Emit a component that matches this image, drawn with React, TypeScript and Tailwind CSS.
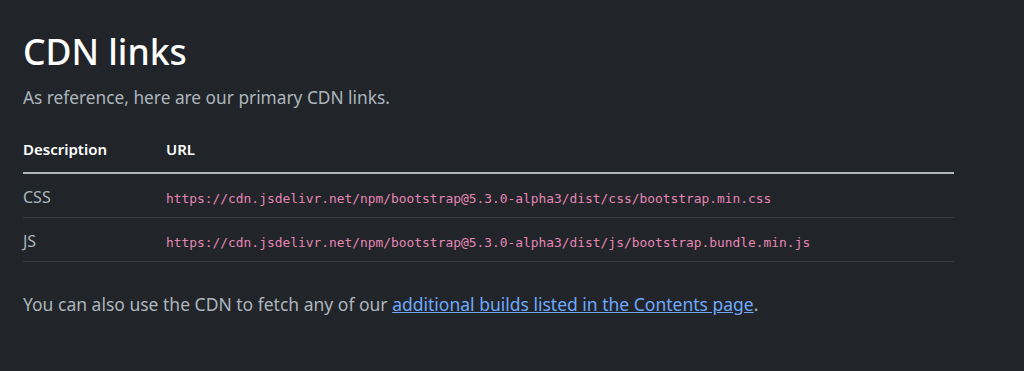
const LINKS = [
  { desc: "CSS", url: "https://cdn.jsdelivr.net/npm/bootstrap@5.3.0-alpha3/dist/css/bootstrap.min.css" },
  { desc: "JS", url: "https://cdn.jsdelivr.net/npm/bootstrap@5.3.0-alpha3/dist/js/bootstrap.bundle.min.js" },
];

export default function App() {
  return (
    <div className="min-h-[371px] bg-[#212529] px-[23px] pt-[26px] font-['Noto_Sans',sans-serif] text-[#dee2e6]">
      {/* Heading */}
      <h2 className="text-[35.5px] font-medium leading-[50px] text-white">CDN links</h2>
      <p className="mt-[9px] text-[17.3px] leading-[26px] text-[#adb5bd]">
        As reference, here are our primary CDN links.
      </p>

      {/* Table */}
      <table className="mt-[17px] w-[931px] border-separate border-spacing-0 text-left">
        <thead>
          <tr>
            <th className="w-[143px] border-b-2 border-[#adb5bd] pt-[9px] pb-[11px] text-[15px] leading-6 font-semibold text-white">
              Description
            </th>
            <th className="border-b-2 border-[#adb5bd] pt-[9px] pb-[11px] text-[15px] leading-6 font-semibold text-white">
              URL
            </th>
          </tr>
        </thead>
        <tbody>
          {LINKS.map((l) => (
            <tr key={l.desc}>
              <td className="border-b border-[#373b3e] pt-[11px] pb-[8px] text-[16px] leading-6 text-[#adb5bd]">{l.desc}</td>
              <td className="border-b border-[#373b3e] pt-[11px] pb-[8px] text-[16px] leading-6">
                <code className="font-['DejaVu_Sans_Mono',monospace] text-[12.9px] leading-none text-[#e685b5]">{l.url}</code>
              </td>
            </tr>
          ))}
        </tbody>
      </table>

      <p className="mt-[29px] text-[17.5px] leading-[26px] text-[#adb5bd]">
        You can also use the CDN to fetch any of our{" "}
        <a href="#" className="text-[#6ea8fe] underline">
          additional builds listed in the Contents page
        </a>
        .
      </p>
    </div>
  );
}
